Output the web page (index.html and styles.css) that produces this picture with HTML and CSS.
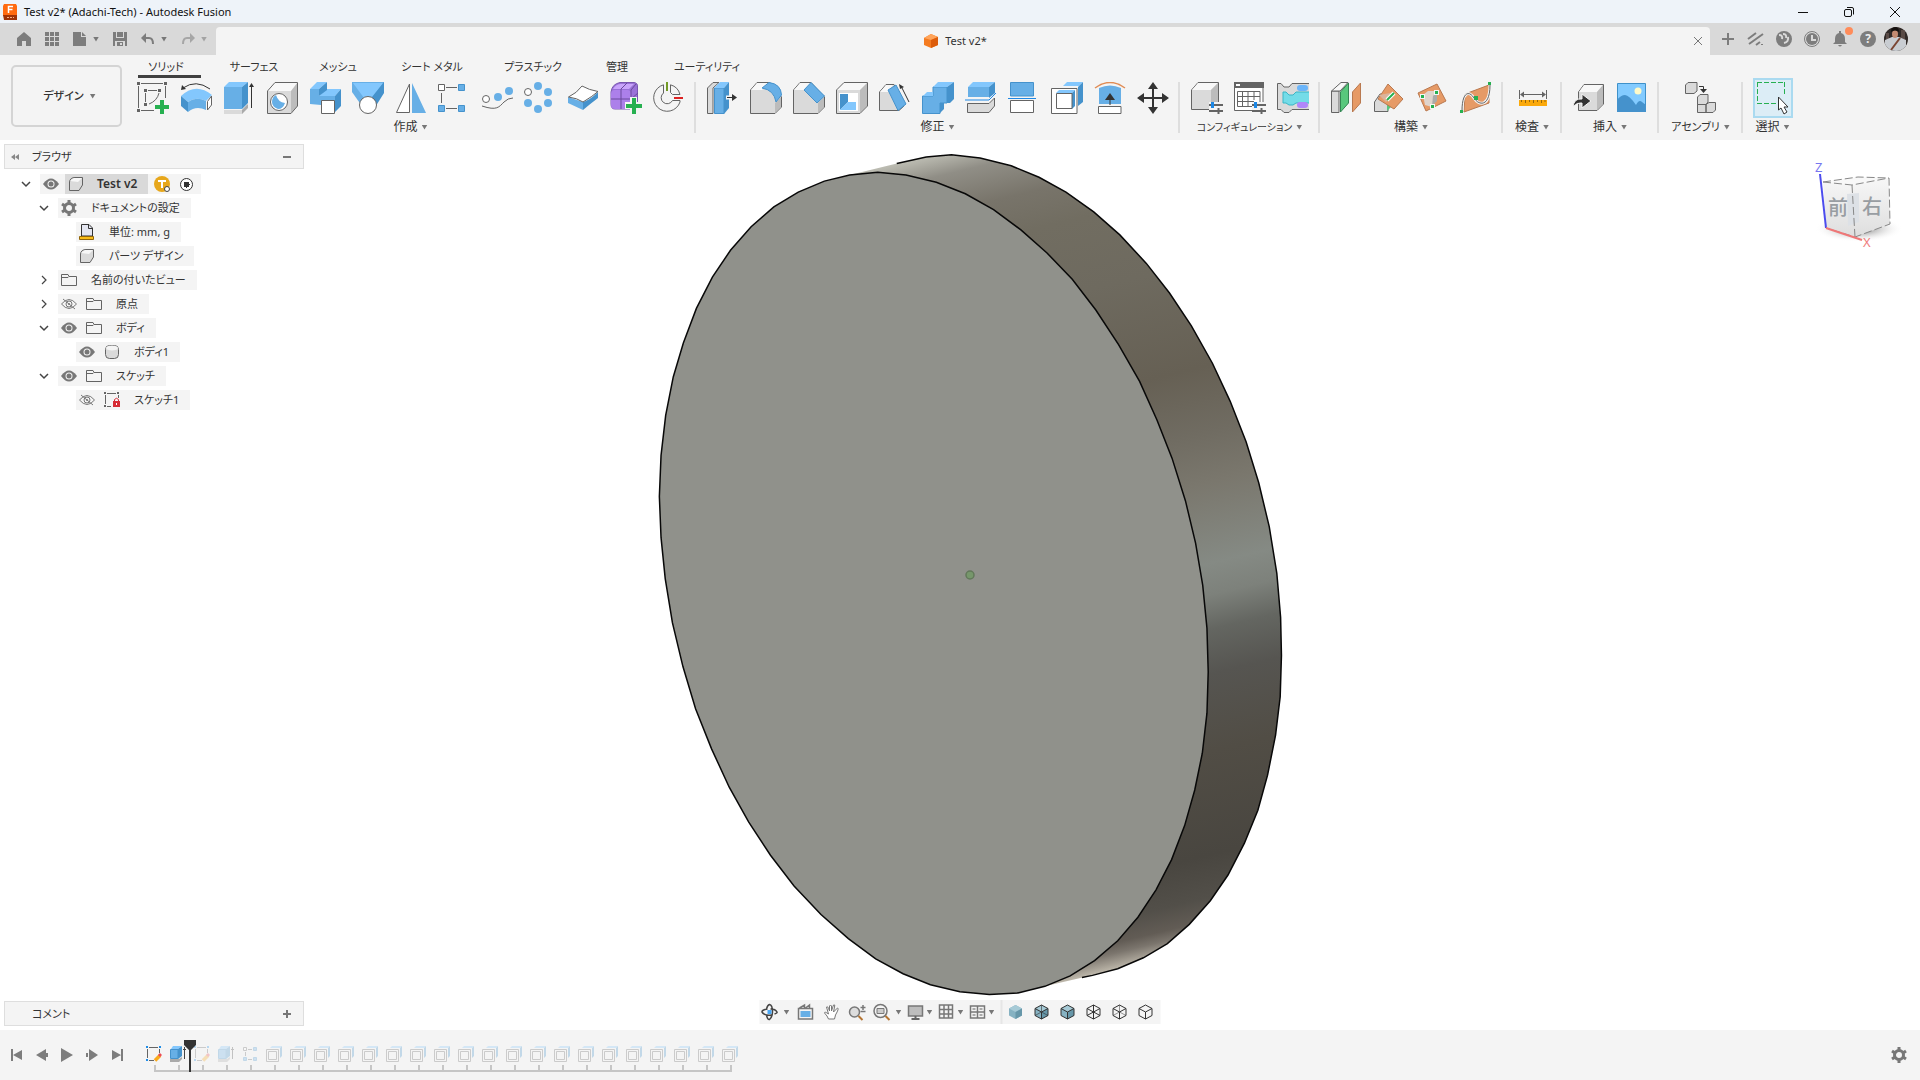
FILE: index.html
```html
<!DOCTYPE html>
<html lang="ja">
<head>
<meta charset="utf-8">
<title>Test v2* (Adachi-Tech) - Autodesk Fusion</title>
<link rel="stylesheet" href="styles.css">
</head>
<body>
<svg class="defs" aria-hidden="true">
  <!-- solid create -->
  <symbol id="sketch" viewBox="0 0 32 32"><path class="k" d="M4 1.500H26M1.500 4V26M4 28.500H17M28.500 4V16M11 8.500H20M8.500 11V20M22 11Q20 19 12 22"/><path class="d" d="M0 0h3v3H0zM27 0h3v3h-3zM0 27h3v3H0zM7 7h3v3H7zM21 7h3v3h-3zM7 21h3v3H7z"/><path fill="#26b050" d="M23 18h4v5h5v4h-5v5h-4v-5h-5v-4h5z"/></symbol>
  <symbol id="revolve" viewBox="0 0 32 32"><path class="k dk" d="M30 7Q16-3 3 6"/><path class="d dk" d="M1 8l1-5 4 4z"/><path class="bl" d="M1 14Q16 0 32 13L26 19Q16 14 8 20z"/><path class="bd" d="M1 14L8 20V30L1 24z"/><path class="b" d="M8 20Q16 14 26 19V28Q16 23 8 30z"/><path class="w" d="M27.500 19.500L31.500 14V23L27.500 28z"/></symbol>
  <symbol id="extrude" viewBox="0 0 32 32"><path class="g" d="M1 28H19L24 22V26L19 32H1z"/><path fill="#aaa" d="M19 28l6-6v4l-6 6z"/><path class="b" d="M1 5H19V27H1z"/><path class="bl" d="M1 5L6 0H25L19 5z"/><path class="bd" d="M19 5L25 0V21L19 27z"/><path class="k dk" d="M28.500 3V26"/><path class="d dk" d="M26 5l2.500-4L31 5z"/></symbol>
  <symbol id="hole" viewBox="0 0 32 32"><path class="gl" d="M1 9L9 .5H31.500L25 9z"/><path class="gd" d="M25 9L31.500 .5V24L25 31z"/><path class="g" d="M1 9H25V31H1z"/><path class="k" d="M1.500 31.500V9L9 .5H31.500V24L25 31.500z"/><circle class="w" cx="13" cy="20" r="8.500"/><path class="b" d="M10 13Q12 20 19 21Q17 27 12 27Q6 25 6 20Q6 15 10 13z"/></symbol>
  <symbol id="sweep" viewBox="0 0 32 32"><path class="b" d="M1 7H10V14H26V29H12V23L1 22z"/><path class="bl" d="M1 7L8 0H18L10 7zM10 14L17 7H32L26 14z"/><path class="bd" d="M10 7L18 0V8L10 14zM26 14L32 7V24L26 30z"/><path class="w" d="M12.500 18.500H25.500V31.500H12.500z"/></symbol>
  <symbol id="loft" viewBox="0 0 32 32"><path class="b" d="M0 0H32V10L20 27H12L0 10z"/><path class="bl" d="M1 1H31L20 16H12z"/><path class="bd" d="M32 0V11L22 27L20 15z"/><circle class="w" cx="16" cy="23" r="8.500"/></symbol>
  <symbol id="mirror" viewBox="0 0 32 32"><path class="w" d="M1.500 30.500L14.500 2V30.500z"/><path class="b" d="M17 1L31 31H17z"/></symbol>
  <symbol id="pattern" viewBox="0 0 32 32"><path class="w" d="M.5 2.500h6v6h-6z"/><path class="k" d="M8 5.500H19M3.500 11V21M8 26.500H19"/><path class="b bs" d="M20.500 2.500h6v6h-6zM20.500 23.500h6v6h-6zM.5 23.500h6v6h-6z"/></symbol>
  <symbol id="pathpat" viewBox="0 0 32 32"><circle class="w" cx="5" cy="17" r="3.500"/><circle class="b" cx="17" cy="15" r="4"/><circle class="b" cx="28" cy="9" r="4"/><path class="k" d="M1 24C16 29 18 25 23 20Q27 16 32 16"/></symbol>
  <symbol id="circpat" viewBox="0 0 32 32"><circle class="w" cx="4" cy="10" r="3.500"/><g class="b"><circle cx="14" cy="4" r="4"/><circle cx="24" cy="10" r="4"/><circle cx="24" cy="21" r="4"/><circle cx="14" cy="27" r="4"/><circle cx="4" cy="21" r="4"/></g></symbol>
  <symbol id="thicken" viewBox="0 0 32 32"><path class="b" d="M1 15L16 20V28L1 21z"/><path class="bd" d="M16 20Q23 18 31 10V16Q23 22 16 28z"/><path class="w" d="M1.500 15Q10 11 15 4Q22 8 31 9.500Q26 14 16 20Q10 16 1.500 15z"/></symbol>
  <symbol id="form" viewBox="0 0 32 32"><path fill="#9a72d8" stroke="#7956b0" d="M1 10Q2 2 10 .5H24Q28 1 27.500 5V20L20 27H5Q1 27 1 22z"/><rect x="1" y="8" width="20" height="19" rx="4" fill="#ac80ea"/><path fill="#c9a4fb" d="M3 7Q6 2 11 2H24L19 7z"/><path fill="none" stroke="#6a4a9c" d="M1 17H21L28 11M11 27V7L17 1M21 25V8L26 2"/><path fill="#f4f4f4" d="M20 15h7v5h5v7h-5v5h-7v-5h-5v-7h5z"/><path fill="#26b050" d="M22 16h4v6h6v4h-6v6h-4v-6h-6v-4h6z"/></symbol>
  <symbol id="derive" viewBox="0 0 32 32"><path class="k" d="M10.500 2.800A13.500 13.500 0 1 0 27 20V18.500H19.500A6 6 0 1 1 10.500 11zM17.500 2.800A13.500 13.500 0 0 1 27 12.500H19.500L17.500 10.500z"/><path fill="#739b27" d="M13 0h2v9h-2z"/><path fill="#dd2222" d="M21 15h9v2h-9z"/></symbol>
  <!-- modify -->
  <symbol id="press" viewBox="0 0 32 32"><path class="g gs" d="M.5 6L6 .5H12L6 6V31.500H.5z"/><path class="b bs" d="M7.500 6H17V31.500H7.500z"/><path class="bl" d="M7 6L13 0H22L17 6z"/><path class="bd" d="M17 6L22 0V26L17 32z"/><path stroke="#f4f4f4" stroke-width="4" d="M19 15.500h8"/><path class="k dk" d="M20 15.500h7"/><path class="d dk" d="M25 12l5 3.500-5 3.500z"/></symbol>
  <symbol id="fillet" viewBox="0 0 32 32"><path class="g gs" d="M.5 8L7 .5H20L31.500 15V25L25 31.500H.5z"/><path class="gl" d="M1 8L7 1H20L12 8z"/><path class="gd" d="M25 21L31 15V25L25 31z"/><path class="b bs" d="M12 6L19 .5Q31 2 31.500 13L26 20Q24 8 12 6z"/></symbol>
  <symbol id="chamfer" viewBox="0 0 32 32"><path class="g gs" d="M.5 8L7 .5H18L31.500 15V25L25 31.500H.5z"/><path class="gl" d="M1 8L7 1H18L11 8z"/><path class="gd" d="M25 21L31 15V25L25 31z"/><path class="b bs" d="M11 8L18 .5L31.500 14L24 21z"/></symbol>
  <symbol id="shell" viewBox="0 0 32 32"><path class="g" d="M.5 8H24V31H.5z"/><path class="gl" d="M1 8L8 1H31L24 8z"/><path class="gd" d="M24 8L31 1V24L24 31z"/><path class="k" d="M.5 31.500V8L8 .5H31.500V24L24 31.500z"/><path fill="#fff" d="M3 11H22V29H3z"/><path class="bd" d="M4 12H12V20L4 28z"/><path class="bl" d="M12 20H20V28H4z"/></symbol>
  <symbol id="draft" viewBox="0 0 32 32"><path class="g gs" d="M.5 10L7 2.500H15L25 24L20 28.500H.5z"/><path class="gl" d="M1 10L7 3H14L9 10z"/><path class="b bs" d="M9 8L17 3L27 22L19 28.500z"/><path class="k dk" d="M22 4L30 20"/><path class="d dk" d="M20 2l5 3-4 2z"/></symbol>
  <symbol id="combine" viewBox="0 0 32 32"><path class="b bs" d="M.5 14H11V5H25V21H18V31.500H.5z"/><path class="bl" d="M1 14L5 10H11V14zM11 5L16 0H32L25 5z"/><path class="bd" d="M25 5L32 0V17L28 21H22V27L18 31V21H25z"/></symbol>
  <symbol id="splitface" viewBox="0 0 32 32"><path class="b" d="M3 5H24V15H3z"/><path class="bl" d="M3 5L8 0H30L24 5z"/><path class="bd" d="M24 5L30 0V11L24 16z"/><path class="g gs" d="M2.500 21.500H24L29.500 16V24L24 30.500H2.500z"/><path class="k bluel" d="M0 18H24L31 11"/></symbol>
  <symbol id="splitbody" viewBox="0 0 32 32"><path class="b bs" d="M2.500 .5H25.500V14H2.500z"/><path class="w" d="M2.500 18.500H25.500V30.500H2.500z"/><path class="k bluel" d="M0 16.500H28"/></symbol>
  <symbol id="replace" viewBox="0 0 32 32"><path class="bl" d="M12 4L16 0H32L28 4z"/><path class="bd" d="M27 5L32 0V20L27 24z"/><path class="w" d="M.5 6.500H26V31.500H.5z"/><path class="bl" d="M5 11L8 8H24L21 11z"/><path class="bd" d="M21 11L24 8V24L21 27z"/><path class="w" d="M5.500 11.500H21V26.500H5.500z"/></symbol>
  <symbol id="offset" viewBox="0 0 32 32"><path fill="none" stroke="#e08c55" stroke-width="1.500" d="M1 6Q16-5 31 6"/><path class="b" d="M5 6Q16 1 27 6V22H5z"/><path class="w" d="M4.500 24.500H27V31.500H4.500z"/><path class="k dk" d="M16 23V14"/><path class="d dk" d="M11 18l5-7 5 7z"/></symbol>
  <symbol id="move" viewBox="0 0 32 32"><path class="d dk" d="M16 0l5 7h-4v8h8v-4l7 5-7 5v-4h-8v8h4l-5 7-5-7h4v-8H7v4l-7-5 7-5v4h8V7h-4z"/></symbol>
  <!-- configuration -->
  <symbol id="conf" viewBox="0 0 32 32"><path class="g gs" d="M.5 8L7 .5H27.500V22L20 27.500H.5z"/><path class="gl" d="M1 8L7 1H27L20 8z"/><path class="gd" d="M20 8L27 1V22L20 27z"/><path stroke="#f4f4f4" stroke-width="6" d="M18 23H32M18 29H32"/><path class="k k2" d="M18 23H32M18 29H32M27.500 26v6"/><path stroke="#1e88e5" stroke-width="3" d="M21.500 20v6"/></symbol>
  <symbol id="conftab" viewBox="0 0 32 32"><path class="w" d="M.5 1H29V28.500H.5z"/><path class="d" d="M0 0H30V6H0z"/><path fill="#fff" d="M2 2h4v2H2z"/><path class="k" d="M3.500 9.500H26V24.500H3.500zM3.500 14.500H26M3.500 19.500H20M8.500 9V24M14 9V24M20 9V18"/><path stroke="#f4f4f4" stroke-width="6" d="M18 23H32M18 29H32"/><path class="k k2" d="M18 23H32M18 29H32M27.500 26v6"/><path stroke="#1e88e5" stroke-width="3" d="M21.500 20v6"/></symbol>
  <symbol id="blocks" viewBox="0 0 32 32"><path class="g gs" d="M32 27.500H15L12 30.500H7L4 27.500H.5V1.500H4L7 5H12L15 1.500H32"/><path fill="#74dce8" stroke="#39b6c6" d="M32 21H19L16 23H12L9 21H6V10H9L12 13H16L19 10H32"/><rect x="20" y="3" width="11" height="6" rx="3" fill="#6bb5fa"/><rect x="20" y="20" width="11" height="6" rx="3" fill="#b087fa"/></symbol>
  <!-- construct -->
  <symbol id="plane1" viewBox="0 0 32 32"><path class="g gs" d="M.5 9H8V30.500H.5z"/><path class="gl gs" d="M.5 9L10 .5H17L9 9z"/><path fill="#58c77c" stroke="#348653" d="M9.500 10L17.500 1V21L9.500 30z"/><path class="o" d="M21.500 10L29.500 1V21L21.500 30z"/></symbol>
  <symbol id="plane2" viewBox="0 0 32 32"><path class="g gs" d="M.5 20L6 12H14V29.500H.5z"/><path fill="#58c77c" d="M13 29V20L24 12V18z"/><path class="o" d="M4 17L14 2L29 17L20 27z"/><path fill="#dbb39b" d="M5 13L16 11L19 14L12 20z"/><path stroke="#fff" stroke-width="4" d="M13 18L20 11"/><path stroke="#26b050" stroke-width="2" d="M13 18L20 11"/></symbol>
  <symbol id="plane3" viewBox="0 0 32 32"><path class="o" d="M1 11L20 2L29 19L9 29z"/><path fill="#dfd4cc" d="M6 13L11 9H20L19 18L15 25L8 23z"/><path fill="#aaa" d="M16 14l4-4v9l-5 5z"/><path fill="#f4f4f4" d="M3 12h5v5H3zM17 8h5v5h-5zM13 22h5v5h-5z"/><path class="gr" d="M4 13h3v3H4zM18 9h3v3h-3zM14 23h3v3h-3z"/></symbol>
  <symbol id="plane4" viewBox="0 0 32 32"><path class="o" d="M5 12L29 3V21L4 30z"/><path fill="none" stroke="#f4f4f4" stroke-width="3" d="M2 29C2 10 9 8 14 16S30 25 30 3"/><path class="k" d="M2 29C2 10 9 8 14 16S30 25 30 3"/><path class="gr" d="M0 28h3v3H0zM28 0h3v3h-3zM14 14h4v4h-4z"/></symbol>
  <symbol id="measure" viewBox="0 0 32 32"><path class="k" d="M2.500 8V17M29.500 8V17M4 12.500H28"/><path class="d" d="M3 12.500l4-3v6zM29 12.500l-4-3v6z"/><path fill="#fba90a" d="M2 18H30V24H2z"/><path stroke="#96650b" d="M4.500 18v2M8.500 18v3M12.500 18v2M16.500 18v3M20.500 18v2M24.500 18v3M28 18v2"/></symbol>
  <symbol id="insert" viewBox="0 0 32 32"><path class="g gs" d="M5.500 10L11 2.500H30.500V22L24 28.500H5.500z"/><path class="gl" d="M6 10L11 3H30L24 10z"/><path class="gd" d="M24 10L30 3V22L24 28z"/><path class="d dk" stroke="#f4f4f4" d="M0 25Q1 16 9 17V12L18 19L9 26V21Q4 20 0 25z"/></symbol>
  <symbol id="picture" viewBox="0 0 32 32"><path fill="#83cbff" stroke="#3f91c9" d="M1.500 1.500H29.500V29.500H1.500z"/><circle cx="22" cy="9" r="3.500" fill="#fffac8"/><path class="bd" d="M1 18Q5 13 9 13T20 23Q23 17 26 20L30 23V30H1z"/></symbol>
  <symbol id="assembly" viewBox="0 0 32 32"><g class="g gs"><path d="M.5 3L3 .5H12V9L9 11.500H.5zM12.500 15L15 12.500H23V20L21 22.500H12.500zM12.500 22.500H21V30.500H12.500zM21 22.500L24 20.500H30.500V28L28 30.500H21z"/></g><path class="k dk" d="M14 4.500H18.500V8"/><path class="d dk" d="M15 7h7l-3.500 4z"/></symbol>
  <symbol id="select" viewBox="0 0 40 40"><path fill="none" stroke="#26b050" d="M4 4.500H31.500M4 25.500H24M4.500 4V25M31.500 4V18" stroke-dasharray="5 2"/><path fill="#fff" stroke="#333" d="M25.500 19V32L28 30L31 36L34 34L31 29H35z"/></symbol>
  <!-- tree -->
  <symbol id="eye" viewBox="0 0 16 16"><path fill="#777" d="M0 8Q8-3 16 8Q8 19 0 8z"/><circle cx="8" cy="8" r="3.500" fill="#f4f4f4"/><circle cx="8" cy="8" r="2.500" fill="#777"/></symbol>
  <symbol id="eyeoff" viewBox="0 0 16 16"><path class="k kl" d="M.5 8Q8-1 15.500 8Q8 17 .5 8zM2 3L14 13"/><circle class="k kl" cx="8" cy="8" r="3"/><circle cx="8" cy="8" r="1" fill="#777"/></symbol>
  <symbol id="folder" viewBox="0 0 16 16"><path class="k" d="M.5 2.500H7L8 4.500H15.500V13.500H.5zM.5 5.500H7L8 4.500"/></symbol>
  <symbol id="cube" viewBox="0 0 16 16"><path class="g gs" d="M1.500 6Q2 1.500 7 1.500H14.500V9L11 14.500H1.500z"/><path fill="#f7f7f7" d="M2 5L6 2H14L10 6z"/></symbol>
  <symbol id="gear" viewBox="0 0 16 16"><circle cx="8" cy="8" r="4.500" fill="none" stroke="#777" stroke-width="3"/><path stroke="#777" stroke-width="3" d="M8 0v3M8 13v3M1 4l3 2M12 10l3 2M1 12l3-2M12 6l3-2"/></symbol>
  <symbol id="units" viewBox="0 0 16 16"><path fill="#e4e6f0" stroke="#333" d="M2.500 12V.5H10L13.500 4V12z"/><path class="k dk" d="M9.500 .5V4.500H14"/><path fill="#f8bc17" stroke="#92660a" d="M.5 12.500H14.500V15.500H.5z"/></symbol>
  <symbol id="cyl" viewBox="0 0 16 16"><rect x="1.500" y="1.500" width="13" height="13" rx="4" class="g gs"/><ellipse cx="8" cy="4" rx="6" ry="2.500" fill="#f4f4f4"/></symbol>
  <symbol id="lock" viewBox="0 0 16 16"><path class="k" d="M3 1.500H12M1.500 3V12M3 14.500H7M14.500 3V6"/><path class="d" d="M0 0h2v2H0zM13 0h2v2h-2zM0 13h2v2H0z"/><path fill="none" stroke="#d62b35" d="M10.500 9V7.500Q12.500 5 14.500 7.500V9"/><path fill="#d62b35" d="M9 9h7v6H9z"/><path stroke="#fff" d="M12.500 11v2"/></symbol>
  <symbol id="down" viewBox="0 0 16 16"><path fill="none" stroke="#444" stroke-width="1.500" d="M4 6L8 10L12 6"/></symbol>
  <symbol id="right" viewBox="0 0 16 16"><path fill="none" stroke="#444" stroke-width="1.200" d="M6 4L10 8L6 12"/></symbol>
  <!-- navigation -->
  <symbol id="vis" viewBox="0 0 16 16"><path fill="#86b2c2" d="M1.500 4.500L8 1L14.500 4.500V11.500L8 15L1.500 11.500z"/><path fill="#a6cad6" d="M1.500 4.500L8 1L14.500 4.500L8 8z"/><path fill="#6797a9" d="M14.500 4.500L8 8V15L14.500 11.500z"/></symbol>
  <symbol id="wire" viewBox="0 0 16 16"><path fill="none" stroke="#333" d="M1.500 4.500L8 1L14.500 4.500V11.500L8 15L1.500 11.500zL8 8L14.500 4.500M8 8V15"/></symbol>
  <symbol id="inner" viewBox="0 0 16 16"><path fill="none" stroke="#333" d="M8 1V8M1.500 11.500L8 8L14.500 11.500"/></symbol>
  <!-- timeline -->
  <symbol id="tsketch" viewBox="0 0 16 16"><path class="k" d="M3 1.500H12M1.500 3V12M3 14.500H8M13.500 3V7"/><path fill="#1f8de8" d="M0 0h2v2H0zM13 0h2v2h-2zM0 13h2v2H0z"/><path stroke="#f9a91b" stroke-width="3.500" d="M9 14.500L14 9.500"/><path stroke="#ec4b55" stroke-width="3" d="M13 10l2-2"/></symbol>
  <symbol id="textr" viewBox="0 0 16 16"><path fill="#aaa" d="M0 13H9L12 11V13L9 16H0z"/><path class="b bs" d="M.5 3.500H8V12.500H.5z"/><path class="bl" d="M1 3L3 0H12L8 3z"/><path class="bd" d="M8 3L12 0V10L8 13z"/><path stroke="#444" d="M14.500 1V13M13 3.500h3"/></symbol>
  <symbol id="tpat" viewBox="0 0 16 16"><path class="w" d="M1.500 1.500h3v3h-3z"/><path class="k" d="M6 3.500h4M3.500 6v4M6 13.500h4"/><path class="b bs" d="M11.500 1.500h3v3h-3zM11.500 11.500h3v3h-3zM1.500 11.500h3v3h-3z"/></symbol>
  <symbol id="tcomb" viewBox="0 0 16 16"><path class="bl" d="M4 2L6 0H16L14 2z"/><path class="bd" d="M14 2L16 0V10L14 12z"/><path class="k" d="M.5 3.500H12.500V15.500H.5zM2.500 5.500H10.500V13.500H2.500z"/></symbol>
</svg>

<header class="titlebar">
  <svg class="logo" viewBox="0 0 14 17"><path fill="#ff6a10" d="M1 1h12l1 2v10H0V3z"/><path fill="#9e3207" d="M0 12h14v5H1z"/><path fill="none" stroke="#fff" stroke-width="1.500" d="M5.500 10V3.500H10M5.500 6.500H9.500"/><path stroke="#f7b08a" d="M4 14.500h7" stroke-dasharray="2 1"/></svg>
  <h1>Test v2* (Adachi-Tech) - Autodesk Fusion</h1>
  <div class="winctl">
    <button aria-label="最小化"><svg viewBox="0 0 10 10"><path d="M0 5.500h10"/></svg></button>
    <button aria-label="元に戻す"><svg viewBox="0 0 10 10"><rect x=".5" y="2.500" width="7" height="7" rx="1.500"/><path d="M3 .5H8Q9.500 .5 9.500 2V7.500"/></svg></button>
    <button aria-label="閉じる"><svg viewBox="0 0 10 10"><path d="M0 0L10 10M10 0L0 10"/></svg></button>
  </div>
</header>

<div class="appbar">
  <div class="quick">
    <button aria-label="ホーム"><svg class="s14" viewBox="0 0 14 14"><path class="q" d="M7 0L14 6V14H9V9H5V14H0V6z"/></svg></button>
    <button aria-label="データ パネル"><svg class="s14" viewBox="0 0 14 14"><path class="q" d="M0 0h4v4H0zM5 0h4v4H5zM10 0h4v4h-4zM0 5h4v4H0zM5 5h4v4H5zM10 5h4v4h-4zM0 10h4v4H0zM5 10h4v4H5zM10 10h4v4h-4z"/></svg></button>
    <button class="drop" aria-label="ファイル"><svg class="s14" viewBox="0 0 14 14"><path class="q" d="M0 0H8V5H13V14H0zM9 0L13 4H9z"/></svg><i class="caret"></i></button>
    <button aria-label="保存"><svg class="s14" viewBox="0 0 14 14"><path class="q" d="M0 0H3V6H11V0H14V14H12V9H2V14H0zM4 0H10V5H4zM4 10H10V14H4z"/><path fill="#d9d9d9" d="M7 11h2v2H7z"/></svg></button>
    <button class="drop" aria-label="元に戻す"><svg class="s14" viewBox="0 0 14 14"><path fill="none" stroke="#7d7d7d" stroke-width="2" d="M2 6H8Q12 6 12 12"/><path class="q" d="M5 1v10L0 6z"/></svg><i class="caret"></i></button>
    <button class="drop off" aria-label="やり直し"><svg class="s14" viewBox="0 0 14 14"><path fill="none" stroke="#7d7d7d" stroke-width="2" d="M12 6H6Q2 6 2 12"/><path class="q" d="M9 1v10l5-5z"/></svg><i class="caret"></i></button>
  </div>
  <div class="doctab">
    <svg class="s14" viewBox="0 0 14 14"><path fill="#f47b20" d="M0 4L7 0L14 3V11L7 14L0 11z"/><path fill="#ffa45a" d="M0 4L7 0L14 3L7 6z"/><path fill="#dc5c0b" d="M7 6L14 3V11L7 14z"/></svg>
    <span>Test v2*</span>
    <button class="closetab" aria-label="タブを閉じる"><svg viewBox="0 0 10 10"><path d="M1 1L9 9M9 1L1 9"/></svg></button>
  </div>
  <div class="status">
    <button aria-label="新規"><svg viewBox="0 0 16 16"><path class="qs" d="M8 2V14M2 8H14"/></svg></button>
    <button aria-label="拡張機能"><svg viewBox="0 0 16 16"><path class="qs" d="M0 8L8 2M1 13L15 3M8 14L12 11M14 13v1"/></svg></button>
    <button aria-label="オンライン"><svg viewBox="0 0 16 16"><circle class="q" cx="8" cy="8" r="8"/><path fill="none" stroke="#d9d9d9" stroke-width="2" d="M3 4Q7 4 6 8M7 3Q11 3 10 7M12 6Q13 11 8 12"/></svg></button>
    <button aria-label="ジョブ ステータス"><svg viewBox="0 0 16 16"><circle cx="8" cy="8" r="7.500" fill="#d9d9d9" stroke="#7d7d7d"/><circle class="q" cx="8" cy="8" r="6"/><path fill="none" stroke="#d9d9d9" stroke-width="2" d="M8 4V9H12"/></svg></button>
    <button class="bell" aria-label="通知"><svg viewBox="0 0 16 16"><path class="q" d="M7 0h2v2q4 1 4 6v3l2 2H1l2-2V8q0-5 4-6zM6 14h4q-2 3-4 0z"/></svg><i class="dot"></i></button>
    <button class="help" aria-label="ヘルプ">?</button>
    <button aria-label="プロファイル"><svg class="avatar" viewBox="0 0 24 24"><clipPath id="av"><circle cx="12" cy="12" r="12"/></clipPath><g clip-path="url(#av)"><path fill="#302927" d="M0 0h24v24H0z"/><path fill="#594a45" d="M17 3h4v9h-4zM2 6h3v6H2z"/><path fill="#c9cdd2" d="M1 24V13L8 10H15L22 13V24z"/><ellipse cx="11" cy="7" rx="3" ry="4" fill="#c48b72"/><path fill="#15110f" d="M7 5Q7 0 11 0Q15 0 15 5Q11 2 7 5z"/><path stroke="#7b4634" stroke-width="2" d="M16 11L7 23"/></g></svg></button>
  </div>
</div>

<div class="ribbon">
  <button class="workspace">デザイン<i class="caret"></i></button>
  <div class="tools">
    <nav class="tabs">
      <button class="on">ソリッド</button><button>サーフェス</button><button>メッシュ</button><button>シート メタル</button><button>プラスチック</button><button>管理</button><button>ユーティリティ</button>
    </nav>
    <div class="groups">
      <section class="group"><div class="icons">
        <button aria-label="スケッチを作成"><svg><use href="#sketch"/></svg></button><button aria-label="回転"><svg><use href="#revolve"/></svg></button><button aria-label="押し出し"><svg><use href="#extrude"/></svg></button><button aria-label="穴"><svg><use href="#hole"/></svg></button><button aria-label="スイープ"><svg><use href="#sweep"/></svg></button><button aria-label="ロフト"><svg><use href="#loft"/></svg></button><button aria-label="ミラー"><svg><use href="#mirror"/></svg></button><button aria-label="矩形状パターン"><svg><use href="#pattern"/></svg></button><button aria-label="パス上のパターン"><svg><use href="#pathpat"/></svg></button><button aria-label="円形状パターン"><svg><use href="#circpat"/></svg></button><button aria-label="厚み"><svg><use href="#thicken"/></svg></button><button aria-label="フォームを作成"><svg><use href="#form"/></svg></button><button aria-label="派生"><svg><use href="#derive"/></svg></button>
      </div><button class="glabel">作成<i class="caret"></i></button></section>
      <section class="group"><div class="icons">
        <button aria-label="プレス/プル"><svg><use href="#press"/></svg></button><button aria-label="フィレット"><svg><use href="#fillet"/></svg></button><button aria-label="面取り"><svg><use href="#chamfer"/></svg></button><button aria-label="シェル"><svg><use href="#shell"/></svg></button><button aria-label="勾配"><svg><use href="#draft"/></svg></button><button aria-label="結合"><svg><use href="#combine"/></svg></button><button aria-label="面を分割"><svg><use href="#splitface"/></svg></button><button aria-label="ボディを分割"><svg><use href="#splitbody"/></svg></button><button aria-label="面を置換"><svg><use href="#replace"/></svg></button><button aria-label="面をオフセット"><svg><use href="#offset"/></svg></button><button aria-label="移動"><svg><use href="#move"/></svg></button>
      </div><button class="glabel">修正<i class="caret"></i></button></section>
      <section class="group"><div class="icons">
        <button aria-label="コンフィギュレーションを作成"><svg><use href="#conf"/></svg></button><button aria-label="テーブル"><svg><use href="#conftab"/></svg></button><button aria-label="ルール"><svg><use href="#blocks"/></svg></button>
      </div><button class="glabel long">コンフィギュレーション<i class="caret"></i></button></section>
      <section class="group"><div class="icons">
        <button aria-label="オフセット平面"><svg><use href="#plane1"/></svg></button><button aria-label="傾斜平面"><svg><use href="#plane2"/></svg></button><button aria-label="3点を通過する平面"><svg><use href="#plane3"/></svg></button><button aria-label="パスに沿った平面"><svg><use href="#plane4"/></svg></button>
      </div><button class="glabel">構築<i class="caret"></i></button></section>
      <section class="group g-inspect"><div class="icons"><button aria-label="計測"><svg><use href="#measure"/></svg></button></div><button class="glabel">検査<i class="caret"></i></button></section>
      <section class="group"><div class="icons"><button aria-label="派生を挿入"><svg><use href="#insert"/></svg></button><button aria-label="キャンバス"><svg><use href="#picture"/></svg></button></div><button class="glabel">挿入<i class="caret"></i></button></section>
      <section class="group g-assembly"><div class="icons"><button aria-label="コンポーネントを挿入"><svg><use href="#assembly"/></svg></button></div><button class="glabel">アセンブリ<i class="caret"></i></button></section>
      <section class="group g-select"><div class="icons"><button class="active" aria-label="選択"><svg><use href="#select"/></svg></button></div><button class="glabel">選択<i class="caret"></i></button></section>
    </div>
  </div>
</div>

<main class="viewport">
  <svg class="model" viewBox="0 140 1920 890">
    <defs><linearGradient id="side" gradientUnits="userSpaceOnUse" x1="27" y1="150" x2="304" y2="1663">
      <stop offset="0" stop-color="#bcbcb2"/><stop offset=".026" stop-color="#908e86"/><stop offset=".07" stop-color="#78746a"/><stop offset=".114" stop-color="#716d61"/><stop offset=".2" stop-color="#6e6a5f"/><stop offset=".322" stop-color="#666054"/><stop offset=".4" stop-color="#706c62"/><stop offset=".458" stop-color="#7a776d"/><stop offset=".553" stop-color="#858a84"/><stop offset=".59" stop-color="#7d817b"/><stop offset=".63" stop-color="#646661"/><stop offset=".682" stop-color="#565551"/><stop offset=".772" stop-color="#514d45"/><stop offset=".893" stop-color="#494640"/><stop offset=".942" stop-color="#524f49"/><stop offset=".969" stop-color="#625c55"/><stop offset=".981" stop-color="#7b756d"/><stop offset="1" stop-color="#bdb7aa"/>
    </linearGradient></defs>
    <g transform="translate(640 140) scale(.4209 .5485)">
      <path fill="url(#side)" d="M498 64L610 43L680 31L740 27L808 33L882 47L948 68L1012 95L1078 131L1140 173L1203 225L1258 279L1310 339L1360 407L1402 476L1440 550L1470 625L1495 705L1513 790L1522 870L1524 940L1521 1015L1510 1085L1491 1158L1468 1222L1436 1282L1397 1340L1355 1387L1305 1430L1253 1465L1196 1491L1135 1511L1075 1523L1000 1536L962 1543L700 900z"/>
      <path class="edge" d="M610 43L680 31L740 27L808 33L882 47L948 68L1012 95L1078 131L1140 173L1203 225L1258 279L1310 339L1360 407L1402 476L1440 550L1470 625L1495 705L1513 790L1522 870L1524 940L1521 1015L1510 1085L1491 1158L1468 1222L1436 1282L1397 1340L1355 1387L1305 1430L1253 1465L1196 1491L1135 1511L1075 1523L1050 1527"/>
      <path class="edge face" d="M565 59L498 64L438 75L376 95L318 122L264 158L215 201L172 250L134 307L103 370L79 432L61 502L50 575L46 650L50 725L60 800L77 880L102 960L132 1037L170 1110L212 1180L258 1243L310 1304L366 1360L430 1412L495 1456L560 1493L625 1520L690 1540L760 1553L830 1558L898 1555L962 1543L1022 1524L1080 1496L1135 1460L1183 1417L1226 1367L1263 1312L1294 1250L1318 1185L1336 1118L1347 1045L1350 970L1347 890L1337 812L1320 735L1296 658L1264 580L1228 510L1187 440L1137 373L1083 310L1027 254L967 206L905 164L840 127L773 98L704 77L632 64z"/>
    </g>
    <circle cx="970" cy="575" r="4" fill="#76976b" stroke="#62785a" stroke-width="1.500"/>
  </svg>

  <aside class="left">
    <div>
      <div class="panelhead"><svg class="collapse" viewBox="0 0 8 6"><path d="M4 0v6L0 3zM8 0v6L4 3z"/></svg><h2>ブラウザ</h2><button aria-label="最小化"><svg viewBox="0 0 8 8"><path d="M0 4h8"/></svg></button></div>
      <ul class="tree">
        <li><button class="tw" aria-label="折りたたむ"><svg><use href="#down"/></svg></button><div class="pill root"><svg><use href="#eye"/></svg><span class="name"><svg><use href="#cube"/></svg><b>Test v2</b></span><svg viewBox="0 0 16 16"><circle cx="8" cy="8" r="8" fill="#e7a71c"/><path stroke="#fff" stroke-width="2" d="M4 5h8M8 5v7"/><circle cx="13" cy="13" r="2.500" fill="#fff" stroke="#444"/></svg><input type="radio" checked aria-label="コンポーネントをアクティブ化"></div></li>
        <li class="l1"><button class="tw" aria-label="折りたたむ"><svg><use href="#down"/></svg></button><div class="pill"><svg><use href="#gear"/></svg><span>ドキュメントの設定</span></div></li>
        <li class="l2"><div class="pill"><svg><use href="#units"/></svg><span>単位: mm, g</span></div></li>
        <li class="l2"><div class="pill"><svg><use href="#cube"/></svg><span>パーツ デザイン</span></div></li>
        <li class="l1"><button class="tw" aria-label="展開"><svg><use href="#right"/></svg></button><div class="pill"><svg><use href="#folder"/></svg><span>名前の付いたビュー</span></div></li>
        <li class="l1"><button class="tw" aria-label="展開"><svg><use href="#right"/></svg></button><div class="pill"><svg><use href="#eyeoff"/></svg><svg><use href="#folder"/></svg><span>原点</span></div></li>
        <li class="l1"><button class="tw" aria-label="折りたたむ"><svg><use href="#down"/></svg></button><div class="pill"><svg><use href="#eye"/></svg><svg><use href="#folder"/></svg><span>ボディ</span></div></li>
        <li class="l2"><div class="pill"><svg><use href="#eye"/></svg><svg><use href="#cyl"/></svg><span>ボディ1</span></div></li>
        <li class="l1"><button class="tw" aria-label="折りたたむ"><svg><use href="#down"/></svg></button><div class="pill"><svg><use href="#eye"/></svg><svg><use href="#folder"/></svg><span>スケッチ</span></div></li>
        <li class="l2"><div class="pill"><svg><use href="#eyeoff"/></svg><svg><use href="#lock"/></svg><span>スケッチ1</span></div></li>
      </ul>
    </div>
    <div class="panelhead"><h2>コメント</h2><button aria-label="展開"><svg viewBox="0 0 8 8"><path d="M0 4h8M4 0v8"/></svg></button></div>
  </aside>

  <svg class="viewcube" viewBox="0 0 140 120">
    <defs><radialGradient id="sh"><stop offset="0" stop-color="#666"/><stop offset="1" stop-color="#fff" stop-opacity="0"/></radialGradient><linearGradient id="cf" x2="0" y2="1"><stop offset="0" stop-color="#f7f7f7"/><stop offset="1" stop-color="#dedede"/></linearGradient></defs>
    <ellipse cx="79" cy="89" rx="44" ry="13" fill="url(#sh)"/>
    <path fill="#f8f8f8" d="M43 42L78 37L109 38L72 45z"/><path fill="url(#cf)" d="M43 42L72 45L75 97L46 88zM72 45L109 38L110 84L75 97z"/>
    <path fill="#dde1e6" d="M67 54L79 53V82L68 86z"/>
    <path fill="none" stroke="#888" stroke-dasharray="8 3" d="M43 42L78 37L109 38L110 84L75 97L46 88M43 42L72 45L109 38M72 45L75 97"/>
    <path stroke="#4c4cee" stroke-width="2" d="M40 34L46 88"/><path stroke="#ef7777" stroke-width="2" d="M46 88L82 100"/>
    <text x="48" y="75" class="cubetext">前</text><text x="82" y="74" class="cubetext">右</text>
    <text x="35" y="32" class="axis z">Z</text><text x="83" y="107" class="axis x">X</text>
  </svg>

  <div class="navbar">
    <button class="wide" aria-label="オービット"><svg viewBox="0 0 16 16"><path class="orbit" d="M6 5Q0 6 .5 8Q3 12 10 11M13 10Q16 9 15.500 8Q14 5 9 5M5 11Q6 16 8 15.500Q11 13 11 8Q11 1 8 .5Q6 1 5 5"/><path fill="#4aa7f5" d="M6 6h4v4H6z"/></svg><i class="caret"></i></button>
    <button aria-label="ビュー正面"><svg viewBox="0 0 16 16"><path class="k k2" d="M1 4.500H15V15H1zM2 4L7 1V4M8 4L12 1V4"/><path class="b" d="M3 7h10v6H3z"/></svg></button>
    <button aria-label="画面移動"><svg viewBox="0 0 16 16"><path fill="#fff" stroke="#777" d="M5 15Q4 12 1 9Q1 7 5 10L3 3Q4 1 6 7V2Q7 0 8 2V7L10 1Q12 0 11 3L10 8L14 4Q16 4 12 11L11 15z"/></svg></button>
    <button aria-label="ズーム"><svg viewBox="0 0 16 16"><circle cx="5" cy="8" r="5" fill="#ddd" stroke="#777" stroke-width="1.500"/><path stroke="#b57532" stroke-width="2" d="M9 12l4 4"/><path class="k" d="M11 3.500h5M13.500 1v5M11 7.500h5"/></svg></button>
    <button class="wide fit" aria-label="フィット"><svg viewBox="0 0 16 16"><circle class="k k2" cx="7" cy="7" r="6.500"/><path fill="#ccc" stroke="#777" d="M3.500 4.500h7v5h-7z"/><path stroke="#b57532" stroke-width="2" d="M12 12l4 4"/></svg><i class="caret"></i></button>
    <button class="tight" aria-label="表示設定"><svg viewBox="0 0 16 16"><path fill="#bdbdbd" stroke="#777" stroke-width="1.500" d="M1 2h14v10H1z"/><path class="d" d="M7 12h2v2h3v2H4v-2h3z"/></svg><i class="caret"></i></button>
    <button class="tight" aria-label="グリッド"><svg viewBox="0 0 16 16"><path class="k k2" d="M1 1H14V14H1zM5.500 1V14M10 1V14M1 5.500H14M1 10H14"/></svg><i class="caret"></i></button>
    <button class="tight" aria-label="ビューポート"><svg viewBox="0 0 16 16"><path class="k k2" d="M1 2H15V14H1zM8 2V14M1 8H15"/><path fill="#aaa" d="M3 4h3v2H3zM10 4h3v2h-3zM3 10h3v2H3zM10 10h3v2h-3z"/></svg><i class="caret"></i></button>
    <div class="styles">
      <button aria-label="シェーディング"><svg><use href="#vis"/></svg></button><button aria-label="隠線付き"><svg><use href="#vis"/><use href="#wire"/><use href="#inner" opacity=".6"/></svg></button><button aria-label="エッジ付き"><svg><use href="#vis"/><use href="#wire"/></svg></button><button aria-label="ワイヤフレーム"><svg><use href="#wire"/><use href="#inner"/></svg></button><button aria-label="隠しエッジ"><svg><use href="#wire"/><use href="#inner" opacity=".5"/></svg></button><button aria-label="表示エッジのみ"><svg><use href="#wire"/></svg></button>
    </div>
  </div>
</main>

<footer class="timeline">
  <div class="play">
    <button aria-label="先頭"><svg viewBox="0 0 12 12"><path d="M0 0h2v12H0zM11 1v10L2 6z"/></svg></button>
    <button aria-label="前へ"><svg viewBox="0 0 12 12"><path d="M10 0v12L0 6zM10 4h2v4h-2z"/></svg></button>
    <button aria-label="再生"><svg viewBox="0 0 12 14"><path d="M0 0v14l12-7z"/></svg></button>
    <button aria-label="次へ"><svg viewBox="0 0 12 12"><path d="M0 4h2v4H0zM3 0v12l9-6z"/></svg></button>
    <button aria-label="最後"><svg viewBox="0 0 12 12"><path d="M10 0h2v12h-2zM1 1v10l9-5z"/></svg></button>
  </div>
  <div class="history">
    <ol>
      <li><svg><use href="#tsketch"/></svg></li>
      <li class="now"><svg><use href="#textr"/></svg><svg class="marker" viewBox="0 0 12 32"><path d="M0 0H12V5L7 10V32H5V10L0 5z"/></svg></li>
      <li class="off"><svg><use href="#tsketch"/></svg></li>
      <li class="off"><svg><use href="#textr"/></svg></li>
      <li class="off"><svg><use href="#tpat"/></svg></li>
      <li class="off"><svg><use href="#tcomb"/></svg></li><li class="off"><svg><use href="#tcomb"/></svg></li><li class="off"><svg><use href="#tcomb"/></svg></li><li class="off"><svg><use href="#tcomb"/></svg></li><li class="off"><svg><use href="#tcomb"/></svg></li>
      <li class="off"><svg><use href="#tcomb"/></svg></li><li class="off"><svg><use href="#tcomb"/></svg></li><li class="off"><svg><use href="#tcomb"/></svg></li><li class="off"><svg><use href="#tcomb"/></svg></li><li class="off"><svg><use href="#tcomb"/></svg></li>
      <li class="off"><svg><use href="#tcomb"/></svg></li><li class="off"><svg><use href="#tcomb"/></svg></li><li class="off"><svg><use href="#tcomb"/></svg></li><li class="off"><svg><use href="#tcomb"/></svg></li><li class="off"><svg><use href="#tcomb"/></svg></li>
      <li class="off"><svg><use href="#tcomb"/></svg></li><li class="off"><svg><use href="#tcomb"/></svg></li><li class="off"><svg><use href="#tcomb"/></svg></li><li class="off"><svg><use href="#tcomb"/></svg></li><li class="off"><svg><use href="#tcomb"/></svg></li>
    </ol>
    <div class="track"></div>
  </div>
  <button class="prefs" aria-label="タイムライン設定"><svg><use href="#gear"/></svg></button>
</footer>
</body>
</html>
```
FILE: styles.css
```css
* { box-sizing: border-box; }
body {
  margin: 0;
  min-height: 100vh;
  display: flex;
  flex-direction: column;
  background: #fff;
  color: #333;
  font: 12px/16px "Noto Sans", "Noto Sans CJK JP", sans-serif;
  font-feature-settings: "palt";
}
button {
  display: flex;
  align-items: center;
  justify-content: center;
  padding: 0;
  border: 0;
  background: none;
  color: inherit;
  font: inherit;
  font-feature-settings: inherit;
  white-space: nowrap;
}
h1, h2 { margin: 0; font-size: 11px; font-weight: 400; }
ul, ol { margin: 0; padding: 0; list-style: none; }
svg { display: block; flex: none; overflow: visible; }
.defs { position: absolute; width: 0; height: 0; }
.s14 { width: 14px; height: 14px; }
.caret {
  flex: none;
  width: 6px;
  height: 5px;
  background: #777;
  clip-path: polygon(0 0, 100% 0, 50% 100%);
}

/* icon palette */
.k { fill: none; stroke: #646464; }
.k2 { stroke-width: 2; }
.kl { stroke: #777; }
.d { fill: #646464; }
.k.dk { stroke: #333; }
.d.dk { fill: #333; }
.w { fill: #fff; stroke: #646464; }
.b { fill: #67afe6; }
.bl { fill: #83c7fd; }
.bd { fill: #4592cc; }
.bs { stroke: #4592cc; }
.g { fill: #dadada; }
.gl { fill: #f8f8f8; }
.gd { fill: #bcbcbc; }
.gs { stroke: #646464; }
.o { fill: #e69a66; stroke: #b97950; }
.gr { fill: #26b050; }
.k.bluel { stroke: #1e88e5; stroke-width: 1; }
.q { fill: #7d7d7d; }
.qs { fill: none; stroke: #7d7d7d; stroke-width: 2; }

.titlebar { display: flex; align-items: center; height: 23px; padding: 0 2px 0 3px; background: #eef3f9; color: #111; }
.logo { width: 14px; height: 17px; margin-right: 7px; }
.winctl { display: flex; margin-left: auto; }
.winctl button { width: 46px; height: 20px; }
.winctl svg { width: 10px; height: 10px; fill: none; stroke: #111; }

.appbar { display: flex; height: 32px; background: #d9d9d9; }
.quick { display: flex; width: 216px; padding-left: 10px; }
.quick button { width: 28px; }
.quick .drop { width: 40px; gap: 6px; }
.off { opacity: .55; }
.doctab {
  flex: 1;
  display: flex;
  align-items: center;
  justify-content: center;
  gap: 7px;
  margin-top: 4px;
  padding-left: 16px;
  background: #f4f4f4;
  border-radius: 4px 4px 0 0;
  font-size: 11px;
}
.closetab { width: 24px; margin-left: auto; }
.doctab > svg { margin-left: auto; }
.closetab svg { width: 10px; height: 10px; stroke: #777; }
.status { display: flex; padding: 0 10px 0 4px; }
.status button { width: 28px; }
.status svg { width: 16px; height: 16px; }
.status .avatar { width: 24px; height: 24px; }
.bell { position: relative; }
.dot { position: absolute; top: 4px; right: 1px; width: 8px; height: 8px; border-radius: 50%; background: #ff8c5a; }
.status .help { width: 16px; height: 16px; margin: 8px 6px; border-radius: 50%; background: #7d7d7d; color: #eee; font-weight: 700; }

.ribbon { display: flex; height: 85px; background: #f4f4f4; }
.workspace { width: 111px; height: 62px; margin: 10px 0 0 11px; padding-left: 6px; gap: 6px; border: 2px solid #d4d4d4; border-radius: 5px; font-size: 11px; font-weight: 500; }
.tabs { display: grid; grid-template-columns: 88px 88px 80px 108px 94px 74px 106px; height: 23px; font-size: 11px; }
.tabs .on { margin: 0 9px 0 16px; padding-right: 7px; box-shadow: inset 0 -3px #404040; }
.groups { display: flex; margin-top: 4px; padding-left: 4px; }
.group { padding: 0 4px 0 5px; border-right: 2px solid #dedede; height: 51px; }
.icons { display: flex; justify-content: center; height: 32px; }
.icons button { width: 43px; padding: 0 5px 0 6px; }
.icons svg { width: 32px; height: 32px; }
.glabel { height: 16px; margin: 5px auto 0; gap: 4px; }
.glabel.long { font-size: 10px; }
.g-inspect { width: 59px; }
.g-assembly { width: 84px; }
.g-assembly .glabel { font-size: 11px; }
.g-select { width: 58px; border-right: 0; }
.icons .active { width: 40px; height: 40px; margin-top: -4px; padding: 0; background: #dcedf6; outline: 2px solid #aadaf0; outline-offset: -2px; }
.icons .active svg { width: 40px; height: 40px; }

.viewport { position: relative; flex: 1; display: flex; min-height: 500px; overflow: hidden; }
.model { position: absolute; width: 100%; height: 100%; }
.edge { fill: none; stroke: #080808; stroke-width: 1.500; vector-effect: non-scaling-stroke; }
.edge.face { fill: #90918b; }
.left { position: relative; display: flex; flex-direction: column; justify-content: space-between; width: 308px; padding: 4px; }
.panelhead { display: flex; align-items: center; height: 25px; padding: 0 12px 0 6px; border: 1px solid #dedede; background: #f4f4f4; }
.panelhead h2 { flex: 1; padding-left: 21px; }
.panelhead .collapse + h2 { padding-left: 13px; }
.panelhead svg { width: 8px; height: 8px; fill: none; stroke: #777; stroke-width: 2; }
.panelhead .collapse { height: 6px; fill: #888; stroke: none; }
.tree { padding-top: 5px; font-size: 11px; }
.tree li { display: flex; height: 20px; margin-bottom: 4px; padding-left: 14px; }
.tree .l1 { padding-left: 32px; }
.tree .l2 { padding-left: 72px; }
.tree svg { width: 16px; height: 16px; }
.tw { width: 16px; margin-right: 6px; }
.pill { display: flex; align-items: center; gap: 9px; padding: 0 11px 0 3px; background: #f4f4f4; }
.pill span { margin-left: 5px; }
.pill.root { padding-right: 8px; gap: 6px; }
.pill .name { display: flex; align-items: center; gap: 13px; height: 20px; margin: 0; padding: 0 11px 0 3px; background: #d9d9d9; font-size: 12px; }
.name b { font-weight: 600; }
.pill input { appearance: none; width: 13px; height: 13px; margin: 0 0 0 4px; border: 1px solid #333; border-radius: 50%; background: radial-gradient(#333 0 3px, #fff 3px); }

.viewcube { position: absolute; top: 0; right: 0; width: 140px; height: 120px; }
.cubetext { font: 500 20px "Noto Sans CJK JP", sans-serif; fill: #989da2; }
.axis { font: 13px "Noto Sans", sans-serif; }
.z { fill: #7777f0; }
.x { fill: #f07c7c; }

.navbar { position: absolute; bottom: 6px; left: 50%; transform: translateX(-50%); display: flex; height: 24px; background: #f4f4f4; }
.navbar button { width: 26px; height: 24px; padding-right: 2px; }
.navbar .wide { width: 34px; gap: 6px; }
.navbar .tight { width: 31px; gap: 3px; }
.navbar svg { width: 16px; height: 16px; }
.navbar .k, .navbar .k2 { stroke-width: 1.500; stroke: #777; }
.orbit { fill: none; stroke: #444; stroke-width: 1.500; }
.styles { display: flex; margin-left: 2px; padding-right: 2px; border-left: 2px solid #e6e6e6; }
.navbar .styles button { padding: 0; }

.timeline { display: flex; align-items: center; height: 50px; padding-right: 13px; background: #f4f4f4; }
.play { display: flex; width: 142px; padding-left: 4px; }
.play button { width: 25px; }
.play svg { width: 12px; height: 14px; fill: #7d7d7d; }
.history ol { display: flex; }
.history li { position: relative; display: flex; justify-content: center; width: 24px; height: 24px; background: linear-gradient(#c6c6c6, #c6c6c6) 12px 19px / 2px 5px no-repeat; }
.history { padding-top: 8px; }
.history li svg { width: 16px; height: 16px; }
.history .off { opacity: 1; }
.history .off svg { opacity: .28; }
.track { height: 2px; margin: 0 10px 0 12px; background: #c6c6c6; }
.history .marker { position: absolute; z-index: 1; top: -6px; right: -6px; width: 12px; height: 32px; fill: #333; }
.prefs { margin-left: auto; }
.prefs svg { width: 16px; height: 16px; }
```
